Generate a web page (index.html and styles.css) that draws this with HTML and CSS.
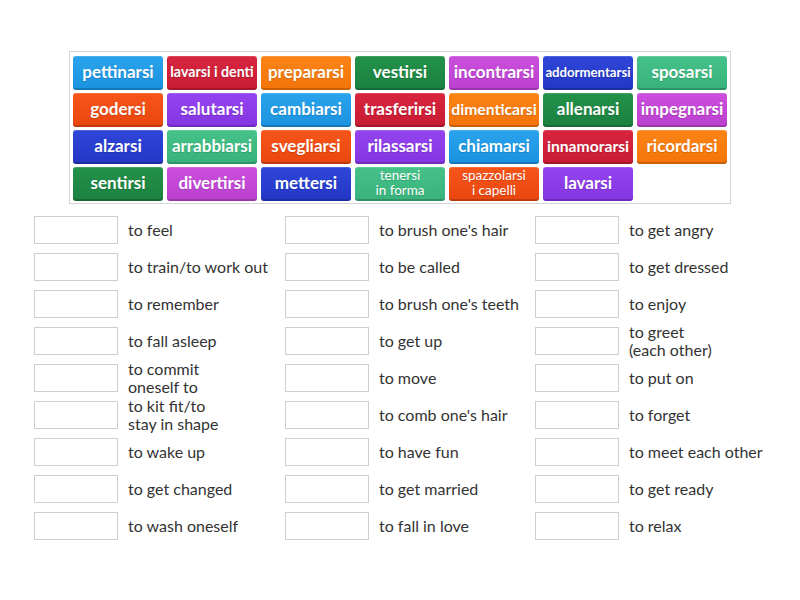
FILE: index.html
```html
<!DOCTYPE html>
<html>
<head>
<meta charset="utf-8">
<link rel="stylesheet" href="styles.css">
</head>
<body>
<div class="bank">
  <div class="tile c1">pettinarsi</div>
  <div class="tile c2 s14">lavarsi i denti</div>
  <div class="tile c3">prepararsi</div>
  <div class="tile c4">vestirsi</div>
  <div class="tile c5">incontrarsi</div>
  <div class="tile c6 s12">addormentarsi</div>
  <div class="tile c7">sposarsi</div>
  <div class="tile c8">godersi</div>
  <div class="tile c9">salutarsi</div>
  <div class="tile c1">cambiarsi</div>
  <div class="tile c2">trasferirsi</div>
  <div class="tile c3 s15">dimenticarsi</div>
  <div class="tile c4">allenarsi</div>
  <div class="tile c5">impegnarsi</div>
  <div class="tile c6">alzarsi</div>
  <div class="tile c7">arrabbiarsi</div>
  <div class="tile c8">svegliarsi</div>
  <div class="tile c9">rilassarsi</div>
  <div class="tile c1">chiamarsi</div>
  <div class="tile c2 s15">innamorarsi</div>
  <div class="tile c3">ricordarsi</div>
  <div class="tile c4">sentirsi</div>
  <div class="tile c5">divertirsi</div>
  <div class="tile c6">mettersi</div>
  <div class="tile c7 two"><span>tenersi</span><span>in forma</span></div>
  <div class="tile c8 two"><span>spazzolarsi</span><span>i capelli</span></div>
  <div class="tile c9">lavarsi</div>
</div>
<div class="answers">
  <div class="item"><div class="box"></div><div class="label">to feel</div></div>
  <div class="item"><div class="box"></div><div class="label">to brush one's hair</div></div>
  <div class="item"><div class="box"></div><div class="label">to get angry</div></div>

  <div class="item"><div class="box"></div><div class="label">to train/to work out</div></div>
  <div class="item"><div class="box"></div><div class="label">to be called</div></div>
  <div class="item"><div class="box"></div><div class="label">to get dressed</div></div>

  <div class="item"><div class="box"></div><div class="label">to remember</div></div>
  <div class="item"><div class="box"></div><div class="label">to brush one's teeth</div></div>
  <div class="item"><div class="box"></div><div class="label">to enjoy</div></div>

  <div class="item"><div class="box"></div><div class="label">to fall asleep</div></div>
  <div class="item"><div class="box"></div><div class="label">to get up</div></div>
  <div class="item"><div class="box"></div><div class="label">to greet<br>(each other)</div></div>

  <div class="item"><div class="box"></div><div class="label">to commit<br>oneself to</div></div>
  <div class="item"><div class="box"></div><div class="label">to move</div></div>
  <div class="item"><div class="box"></div><div class="label">to put on</div></div>

  <div class="item"><div class="box"></div><div class="label">to kit fit/to<br>stay in shape</div></div>
  <div class="item"><div class="box"></div><div class="label">to comb one's hair</div></div>
  <div class="item"><div class="box"></div><div class="label">to forget</div></div>

  <div class="item"><div class="box"></div><div class="label">to wake up</div></div>
  <div class="item"><div class="box"></div><div class="label">to have fun</div></div>
  <div class="item"><div class="box"></div><div class="label">to meet each other</div></div>

  <div class="item"><div class="box"></div><div class="label">to get changed</div></div>
  <div class="item"><div class="box"></div><div class="label">to get married</div></div>
  <div class="item"><div class="box"></div><div class="label">to get ready</div></div>

  <div class="item"><div class="box"></div><div class="label">to wash oneself</div></div>
  <div class="item"><div class="box"></div><div class="label">to fall in love</div></div>
  <div class="item"><div class="box"></div><div class="label">to relax</div></div>
</div>
</body>
</html>
```
FILE: styles.css
```css
html, body {
  margin: 0;
  padding: 0;
  background: #ffffff;
}
body {
  font-family: "Lato", "Open Sans", sans-serif;
}
.bank {
  margin: 51px 0 0 69px;
  width: 654px;
  padding: 4px 3px 2px 3px;
  border: 1px solid #d4d4d4;
  display: grid;
  grid-template-columns: repeat(7, 90px);
  grid-auto-rows: 34px;
  column-gap: 4px;
  row-gap: 3px;
}
.tile {
  border-radius: 3px;
  color: #ffffff;
  font-size: 17px;
  font-weight: 700;
  display: flex;
  flex-direction: column;
  align-items: center;
  justify-content: center;
  text-align: center;
  white-space: nowrap;
  padding-bottom: 3px;
  box-sizing: border-box;
  box-shadow: inset 0 -2px 0 rgba(0,0,0,0.18), inset 0 1px 0 rgba(255,255,255,0.15);
  text-shadow: 0 1px 1px rgba(0,0,0,0.15);
}
.s14 { font-size: 14.2px; }
.s15 { font-size: 15.7px; }
.s12 { font-size: 13.2px; }
.two { font-size: 13.5px; line-height: 15px; padding-bottom: 2px; font-weight: 400; }
.two span { display: block; height: 15px; }
.c1 { background: linear-gradient(#2aa3ec, #1b92df); }
.c2 { background: linear-gradient(#d8253f, #c81c33); }
.c3 { background: linear-gradient(#fb8416, #f47408); }
.c4 { background: linear-gradient(#239149, #1b8140); }
.c5 { background: linear-gradient(#cb4fdc, #bb40cf); }
.c6 { background: linear-gradient(#2f46d8, #2337c6); }
.c7 { background: linear-gradient(#46c289, #38b27a); }
.c8 { background: linear-gradient(#f6551a, #ea460f); }
.c9 { background: linear-gradient(#9444ef, #8435e2); }

.answers {
  margin: 12px 0 0 34px;
  display: grid;
  grid-template-columns: 251px 250px 250px;
  grid-auto-rows: 28px;
  row-gap: 9px;
}
.item {
  display: flex;
  align-items: center;
  gap: 10px;
}
.box {
  width: 82px;
  height: 26px;
  border: 1px solid #cfcfcf;
  background: #fff;
  flex: none;
}
.label {
  font-size: 16px;
  color: #333333;
  line-height: 18px;
  white-space: nowrap;
  margin-top: -1px;
}
```
